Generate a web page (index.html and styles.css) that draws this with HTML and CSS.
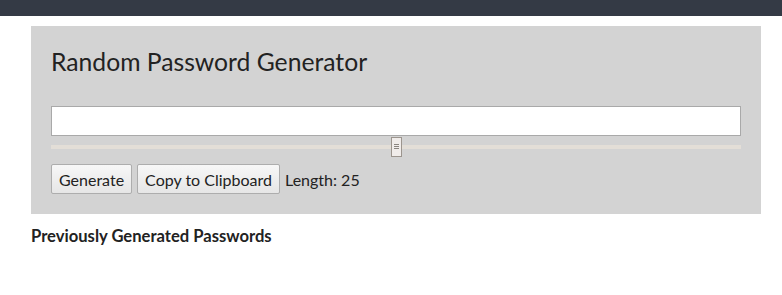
FILE: index.html
```html
<!DOCTYPE html>
<html lang="en">
<head>
  <meta charset="UTF-8" />
  <meta name="viewport" content="width=device-width, initial-scale=1.0"/>
  <title>Random Password Generator</title>
  <link rel="stylesheet" href="styles.css">
</head>
<body>

  <div class="topbar"></div>

  <div class="content">
    <div class="generator">
      <h1>Random Password Generator</h1>
      <input type="text" id="password" class="password">
      <input type="range" id="length" class="slider" min="8" max="42" value="25">
      <div class="controls">
        <button id="generate">Generate</button>
        <button id="copy">Copy to Clipboard</button>
        <span class="length">Length: <span id="lengthValue">25</span></span>
      </div>
    </div>

    <h4 class="history-title">Previously Generated Passwords</h4>
    <ul class="history" id="history"></ul>
  </div>

</body>
</html>
```

FILE: styles.css
```css
body {
  font-family: Lato, 'Segoe UI', sans-serif;
  margin: 0;
  color: #222;
}

.topbar {
  background: #343a45;
  height: 16px;
}

.content {
  margin: 10px 21px 0 31px;
}

.generator {
  background: #d3d3d3;
  padding: 20px;
}

.generator h1 {
  font-size: 24.7px;
  font-weight: normal;
  margin: 0 0 28px;
  line-height: 32px;
}

.password {
  display: block;
  box-sizing: border-box;
  width: 100%;
  height: 30px;
  margin: 0;
  border: 1px solid #a9a9a9;
  background: #fff;
  font-size: 16px;
}

.slider {
  -webkit-appearance: none;
  appearance: none;
  display: block;
  width: 100%;
  height: 20px;
  margin: 1px 0 7px;
  background: transparent;
}

.slider::-webkit-slider-runnable-track {
  height: 4px;
  background: #e3ded7;
}

.slider::-webkit-slider-thumb {
  -webkit-appearance: none;
  width: 11px;
  height: 20px;
  margin-top: -8px;
  box-sizing: border-box;
  border: 1px solid #9c958e;
  background: linear-gradient(#8a8580, #8a8580) 2px 6px / 5px 1px no-repeat,
              linear-gradient(#8a8580, #8a8580) 2px 8px / 5px 1px no-repeat,
              linear-gradient(#8a8580, #8a8580) 2px 10px / 5px 1px no-repeat,
              #f0ecea;
}

.controls {
  display: flex;
  align-items: center;
  gap: 5px;
}

button {
  font-family: inherit;
  font-size: 16px;
  color: #222;
  height: 30px;
  padding: 0 7px;
  border: 1px solid #adadad;
  border-radius: 2px;
  background: linear-gradient(#f7f7f7, #e6e6e6);
  cursor: pointer;
}

button:hover {
  background: linear-gradient(#eef6fc, #dcecfc);
  border-color: #7eb4ea;
}

.length {
  font-size: 16px;
}

.history-title {
  font-size: 16.6px;
  margin: 12px 0;
}

.history {
  margin: 0;
  padding-left: 20px;
}
```
